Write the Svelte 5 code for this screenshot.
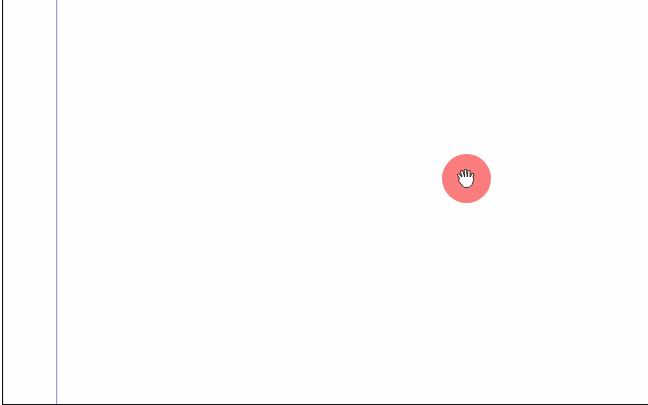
<script>
  const fingers = [
    "M461.5 179 L458.8 175.2",
    "M463.4 177 L461.8 171.8",
    "M466 176.5 L465.4 170.6",
    "M468.8 177 L469 171.6",
    "M471 179 L472.6 174.6"
  ];
</script>

<div class="page">
  <div class="sheet">
    <div class="gutter"></div>
    <div class="canvas">
      <div class="pointer">
        <svg viewBox="442 154 49 49" width="49" height="49" aria-hidden="true">
          {#each fingers as d}
            <path class="outline" {d} />
          {/each}
          <path class="body" d="M460 176.5 L473 176.5 L473.6 180.5 L472 184.5 L469.3 187.4 L464 187.4 L461 184 L458.6 181 Z" />
          {#each fingers as d}
            <path class="finger" {d} />
          {/each}
        </svg>
      </div>
    </div>
  </div>
</div>

<style>
  :global(body) {
    margin: 0;
    background: #fff;
  }
  .page {
    width: 648px;
    height: 405px;
    padding-left: 2px;
    box-sizing: border-box;
    overflow: hidden;
  }
  .sheet {
    display: flex;
    height: 100%;
    box-sizing: border-box;
    background: #fefefe;
    border-left: 1px solid #111;
    border-bottom: 1px solid #111;
    box-shadow: inset 1px 0 0 #e4e4e4;
  }
  .gutter {
    width: 53px;
    flex: none;
    border-right: 1px solid #9c9cd8;
    box-shadow: 1px 0 0 #e6e6f6;
  }
  .canvas {
    flex: 1;
    position: relative;
  }
  .pointer {
    position: absolute;
    left: 385px;
    top: 154px;
    width: 49px;
    height: 49px;
    border-radius: 50%;
    background: #fb7c7c;
  }
  svg {
    display: block;
  }
  .body {
    fill: #fff;
    stroke: #222;
    stroke-width: 0.9;
  }
  .outline {
    fill: none;
    stroke: #222;
    stroke-width: 3.3;
    stroke-linecap: round;
  }
  .finger {
    fill: none;
    stroke: #fff;
    stroke-width: 1.5;
    stroke-linecap: round;
  }
</style>
